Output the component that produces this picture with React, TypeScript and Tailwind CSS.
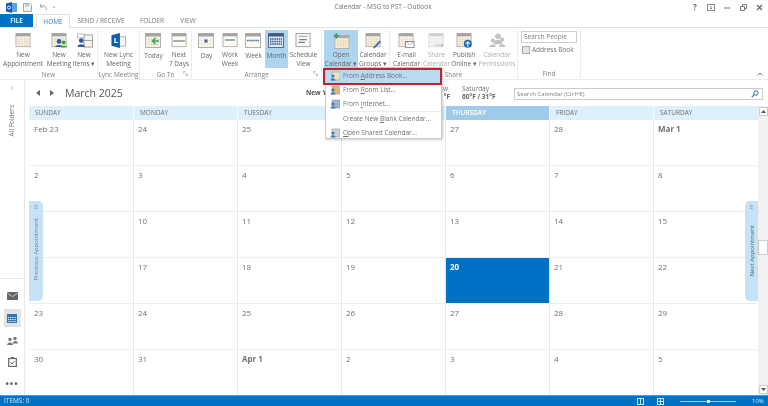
import React from "react";

type IconKind =
  | "appt" | "meet" | "items" | "lync" | "today" | "next7" | "day" | "work" | "week" | "month"
  | "sched" | "open" | "groups" | "email" | "share" | "publish" | "perm";

function CalBase({ fill = "#f9f4e6", head = "#a3a3a3", cols = 5, rows = 4, line = "#dfd3b4" }: { fill?: string; head?: string; cols?: number; rows?: number; line?: string }) {
  const xs = Array.from({ length: cols - 1 }, (_, i) => 1 + ((i + 1) * 14) / cols);
  const ys = Array.from({ length: rows - 1 }, (_, i) => 4 + ((i + 1) * 10) / rows);
  return (
    <g>
      <rect x="0.5" y="0.5" width="15" height="14" fill={fill} stroke="#b0b0b0" />
      <rect x="0.5" y="0.5" width="15" height="3" fill={head} />
      {xs.map((x) => <line key={x} x1={x} y1="4" x2={x} y2="14" stroke={line} strokeWidth="0.6" />)}
      {ys.map((y) => <line key={y} x1="1" y1={y} x2="15" y2={y} stroke={line} strokeWidth="0.6" />)}
    </g>
  );
}

function RibbonIcon({ kind }: { kind: IconKind }) {
  let inner: React.ReactNode = <CalBase />;
  if (kind === "meet") inner = (
    <g>
      <CalBase />
      <circle cx="8" cy="9" r="2.5" fill="#2a5f9e" />
      <path d="M4 15c0-3 8-3 8 0z" fill="#2a5f9e" />
      <circle cx="13" cy="10" r="2" fill="#3d9a46" />
      <path d="M10 15.5c0-3 6.500-3 6.500 0z" fill="#3d9a46" />
    </g>
  );
  if (kind === "items") inner = (
    <g>
      <rect x="8" y="2" width="9" height="12" fill="#f4f4f4" stroke="#a0a0a0" />
      <rect x="8" y="8" width="9" height="7" fill="#f9f4e6" stroke="#a0a0a0" />
      <path d="M1 1h7v4H1z" fill="#fff" stroke="#999" strokeWidth="0.7" />
      <circle cx="5" cy="8" r="2.500" fill="#2a5f9e" />
      <path d="M1 15c0-4 8-4 8 0z" fill="#2a5f9e" />
    </g>
  );
  if (kind === "lync") inner = (
    <g>
      <rect x="7" y="4" width="9" height="10" fill="#f9f4e6" stroke="#b0b0b0" />
      <path d="M1 2.500 10 0v16L1 13.500z" fill="#0f5fae" />
      <text x="3.500" y="11" fontSize="8" fontWeight="700" fill="#fff" fontFamily="Open Sans, sans-serif">L</text>
    </g>
  );
  if (kind === "today") inner = (
    <g>
      <CalBase fill="#f9f5e8" />
      <path d="M14 8H8M10.500 5 7.500 8l3 3" fill="none" stroke="#39a35a" strokeWidth="1.500" />
    </g>
  );
  if (kind === "next7") inner = (
    <g>
      <rect x="0.500" y="0.500" width="15" height="14" fill="#fdfaf0" stroke="#b0b0b0" />
      <rect x="0.500" y="0.500" width="15" height="3" fill="#a3a3a3" />
      <path d="M2 8.500h12" stroke="#667" strokeWidth="1.500" strokeDasharray="1.500 0.600" />
    </g>
  );
  if (kind === "day") inner = (
    <g>
      <CalBase cols={5} rows={3} line="#e4ddcb" fill="#fbf9f2" />
      <rect x="6.500" y="6.500" width="3" height="3" fill="#3d5f8f" />
    </g>
  );
  if (kind === "work" || kind === "week") inner = (
    <g>
      <rect x="0.500" y="0.500" width="15" height="14" fill="#fdfaf0" stroke="#b0b0b0" />
      <rect x="0.500" y="0.500" width="15" height="3" fill="#a3a3a3" />
      <path d={kind === "work" ? "M3 7.500h10" : "M2 7.500h12"} stroke="#4d6f9f" strokeWidth="1.500" strokeDasharray="1.500 0.600" />
    </g>
  );
  if (kind === "month") inner = (
    <g>
      <rect x="0.500" y="0.500" width="15" height="14" fill="#dbe6f2" stroke="#5c6f8a" />
      <rect x="0.500" y="0.500" width="15" height="3" fill="#46587a" />
      <path d="M2 6h12M2 8.500h12M2 11h12" stroke="#34558a" strokeWidth="1.400" strokeDasharray="1.500 0.700" />
    </g>
  );
  if (kind === "sched") inner = (
    <g>
      <rect x="0.500" y="0.500" width="15" height="14" fill="#f8f8f8" stroke="#a0a0a0" />
      <path d="M3 3.500h10" stroke="#a0a0a0" />
      <path d="M4 7h8M3 10h7" stroke="#808080" strokeWidth="1.200" />
    </g>
  );
  if (kind === "open") inner = (
    <g>
      <g transform="translate(1 2)"><CalBase fill="#fbeed2" head="#aaaaaa" /></g>
      <path d="M3 0v6M0 3h6" stroke="#3f9d68" strokeWidth="1.800" />
    </g>
  );
  if (kind === "groups") inner = (
    <g>
      <CalBase fill="#fbf3de" />
      <path d="M8 15.500 15 8l1.500 1.500-7 7z" fill="#3c6fb0" />
    </g>
  );
  if (kind === "email") inner = (
    <g>
      <CalBase fill="#fbf9f2" />
      <rect x="7.500" y="9" width="9" height="6.500" fill="#fff" stroke="#888" />
      <path d="m7.500 9 4.500 3.500L16.500 9" fill="none" stroke="#888" strokeWidth="0.700" />
    </g>
  );
  if (kind === "share") inner = (
    <g opacity="0.5">
      <CalBase fill="#f4f4f4" line="#c8c8c8" />
      <path d="M7 13h8M13 11l2.500 2-2.500 2" fill="none" stroke="#8a8a8a" strokeWidth="1.100" />
    </g>
  );
  if (kind === "publish") inner = (
    <g>
      <CalBase fill="#fbf3de" />
      <circle cx="12" cy="11.500" r="4.200" fill="#1c6db5" />
      <path d="M12 14.500v-5M9.800 11.500 12 9.200l2.200 2.300" fill="none" stroke="#fff" strokeWidth="1.100" />
    </g>
  );
  if (kind === "perm") inner = (
    <g fill="#c2c2c2">
      <circle cx="9" cy="3.500" r="3" />
      <path d="M4.500 11c0-5 9-5 9 0v1h-9z" />
      <circle cx="13.500" cy="7" r="2.200" />
      <circle cx="3.500" cy="8" r="2.200" />
      <path d="M0 15c0-4 7-4 7 0zM10 15c0-4 7-4 7 0z" />
    </g>
  );
  return (
    <svg width="17" height="17" viewBox="0 0 17 17" className="block">
      {inner}
    </svg>
  );
}

function RibbonButton({ width, icon, lines, active, muted }: { width: string; icon: IconKind; lines: string[]; active?: boolean; muted?: boolean }) {
  return (
    <div className={`${width} h-[38px] flex flex-col items-center pt-[3px] shrink-0 ${active ? "bg-[#aed5f0]" : ""}`}>
      <RibbonIcon kind={icon} />
      <div className={`mt-[1px] text-center text-[6.5px] leading-[9px] whitespace-nowrap ${muted ? "text-[#b0b0b0]" : "text-[#666666]"}`}>
        {lines.map((l) => <div key={l}>{l}</div>)}
      </div>
    </div>
  );
}

function Group({ width, label, launcher, children }: { width: string; label: string; launcher?: boolean; children: React.ReactNode }) {
  return (
    <div className={`${width} shrink-0 h-full border-r border-[#ececec] flex flex-col relative`}>
      <div className="h-[38px] flex">{children}</div>
      <div className="h-[11px] pt-[2px] text-center text-[6.5px] leading-[9px] text-[#808080]">{label}</div>
      {launcher && (
        <svg width="5" height="5" viewBox="0 0 5 5" className="absolute right-[3px] bottom-[2px]">
          <path d="M0.500 0.500h2M0.500 0.500v2M1.500 1.500 4.500 4.500M4.500 2.500v2h-2" fill="none" stroke="#aaa" strokeWidth="0.700" />
        </svg>
      )}
    </div>
  );
}

const weeks = [
  ["Feb 23", "24", "25", "", "27", "28", "Mar 1"],
  ["2", "3", "4", "5", "6", "7", "8"],
  ["", "10", "11", "12", "13", "14", "15"],
  ["", "17", "18", "19", "20", "21", "22"],
  ["23", "24", "25", "26", "27", "28", "29"],
  ["30", "31", "Apr 1", "2", "3", "4", "5"],
];
const dayNames = ["SUNDAY", "MONDAY", "TUESDAY", "", "THURSDAY", "FRIDAY", "SATURDAY"];

function MenuRow({ label, icon, highlight }: { label: React.ReactNode; icon?: string; highlight?: boolean }) {
  return (
    <div className={`h-[14px] flex items-center text-[6.5px] text-[#707070] ${highlight ? "bg-[#b8daf2]" : ""}`}>
      <div className="w-[17px] flex justify-center shrink-0">
        {icon && (
          <svg width="10" height="10" viewBox="0 0 10 10">
            <rect x="2" y="1" width="8" height="8" fill={icon} stroke="#999" strokeWidth="0.600" />
            <circle cx="3" cy="5" r="1.600" fill="#3a7fb8" />
            <path d="M0.500 9.500c0-3 5-3 5 0z" fill="#3a7fb8" />
          </svg>
        )}
      </div>
      <div className="whitespace-nowrap">{label}</div>
    </div>
  );
}

export default function App() {
  return (
    <div className="relative w-[768px] h-[406px] overflow-hidden bg-white font-['Open_Sans',sans-serif] flex flex-col text-[#555] blur-[0.4px]">
      {/* Title bar */}
      <div className="h-[14px] shrink-0 relative flex items-center">
        <div className="w-[20px] flex justify-center ml-[1px]">
          <svg width="11" height="11" viewBox="0 0 11 11">
            <rect x="4" y="1" width="7" height="9" fill="#5ba3dc" />
            <path d="M0 1.500 6 0v11L0 9.500z" fill="#0f5fae" />
            <circle cx="3" cy="5.500" r="1.500" fill="none" stroke="#fff" strokeWidth="0.900" />
          </svg>
        </div>
        <div className="w-[16px] flex justify-center ml-[-2px]">
          <svg width="9" height="9" viewBox="0 0 9 9">
            <path d="M0.500 0.500h6.500l1.500 1.500v6.500h-8z" fill="#f2f2f2" stroke="#a8a8a8" />
            <rect x="2" y="0.500" width="4" height="3" fill="#c4c4c4" />
          </svg>
        </div>
        <div className="w-[16px] flex justify-center">
          <svg width="9" height="9" viewBox="0 0 9 9">
            <path d="M1.500 1v3h3M1.500 4C3 2 7 1.800 7.500 7" fill="none" stroke="#a8a8a8" strokeWidth="1" />
          </svg>
        </div>
        <div className="w-[6px] text-[6px] text-[#aaa] text-center">▪</div>
        <div className="flex-1 text-center text-[6.5px] text-[#707070] pr-[59px]">Calendar - MSG to PST - Outlook</div>
        <div className="flex items-center text-[#666] absolute right-0 top-0 h-[14px]">
          <span className="w-[16px] text-center text-[8px] font-bold">?</span>
          <span className="w-[16px] flex justify-center">
            <svg width="8" height="7" viewBox="0 0 8 7"><rect x="0.500" y="0.500" width="7" height="6" fill="none" stroke="#888" /><path d="M4 2v3M2.800 3.800 4 5l1.200-1.200" stroke="#666" fill="none" strokeWidth="0.700" /></svg>
          </span>
          <span className="w-[16px] flex justify-center">
            <svg width="6" height="6" viewBox="0 0 6 6"><path d="M0 4h6" stroke="#777" strokeWidth="1" /></svg>
          </span>
          <span className="w-[16px] flex justify-center">
            <svg width="7" height="7" viewBox="0 0 7 7"><path d="M0.500 2.500h4v4h-4zM2.500 2.500v-2h4v4h-2" fill="none" stroke="#777" strokeWidth="1" /></svg>
          </span>
          <span className="w-[17px] flex justify-center">
            <svg width="7" height="7" viewBox="0 0 7 7"><path d="m1 1 5 5M6 1 1 6" stroke="#666" strokeWidth="1.200" /></svg>
          </span>
        </div>
      </div>

      {/* Tabs */}
      <div className="h-[14px] shrink-0 flex items-stretch text-[6.5px] border-b border-[#e2e2e2] text-[#777]">
        <div className="w-[33px] bg-[#0072c6] text-white font-semibold flex items-center justify-center">FILE</div>
        <div className="ml-[3px] w-[34px] h-[14px] bg-white border border-b-0 border-[#e2e2e2] text-[#2f7fc1] flex items-center justify-center">HOME</div>
        <div className="w-[62px] flex items-center justify-center">SEND / RECEIVE</div>
        <div className="w-[40px] flex items-center justify-center">FOLDER</div>
        <div className="w-[32px] flex items-center justify-center">VIEW</div>
      </div>

      {/* Ribbon */}
      <div className="h-[52px] shrink-0 flex pt-[2px] pb-[1px] border-b border-[#ececec] relative">
        <Group width="w-[98px]" label="New">
          <RibbonButton width="w-[46px]" icon="appt" lines={["New", "Appointment"]} />
          <RibbonButton width="w-[26px]" icon="meet" lines={["New", "Meeting"]} />
          <RibbonButton width="w-[24px]" icon="items" lines={["New", "Items ▾"]} />
        </Group>
        <Group width="w-[42px]" label="Lync Meeting">
          <RibbonButton width="w-[41px]" icon="lync" lines={["New Lync", "Meeting"]} />
        </Group>
        <Group width="w-[52px]" label="Go To" launcher>
          <RibbonButton width="w-[27px]" icon="today" lines={["Today"]} />
          <RibbonButton width="w-[24px]" icon="next7" lines={["Next", "7 Days"]} />
        </Group>
        <Group width="w-[130px]" label="Arrange" launcher>
          <div className="w-[3px]" />
          <RibbonButton width="w-[23px]" icon="day" lines={["Day"]} />
          <RibbonButton width="w-[24px]" icon="work" lines={["Work", "Week"]} />
          <RibbonButton width="w-[23px]" icon="week" lines={["Week"]} />
          <RibbonButton width="w-[23px]" icon="month" lines={["Month"]} active />
          <RibbonButton width="w-[31px]" icon="sched" lines={["Schedule", "View"]} />
        </Group>
        <Group width="w-[68px]" label="">
          <div className="w-[2px]" />
          <RibbonButton width="w-[34px]" icon="open" lines={["Open", "Calendar ▾"]} active />
          <RibbonButton width="w-[30px]" icon="groups" lines={["Calendar", "Groups ▾"]} />
        </Group>
        <Group width="w-[128px]" label="Share">
          <RibbonButton width="w-[33px]" icon="email" lines={["E-mail", "Calendar"]} />
          <RibbonButton width="w-[27px]" icon="share" lines={["Share", "Calendar"]} muted />
          <RibbonButton width="w-[28px]" icon="publish" lines={["Publish", "Online ▾"]} />
          <RibbonButton width="w-[38px]" icon="perm" lines={["Calendar", "Permissions"]} muted />
        </Group>
        <Group width="w-[63px]" label="Find">
          <div className="pl-[3px] pt-[1px]">
            <div className="w-[56px] h-[12px] border border-[#cdcdcd] text-[6.5px] leading-[10px] pl-[2px] text-[#808080]">Search People</div>
            <div className="mt-[2px] flex items-center gap-[2px] text-[6.5px] leading-[9px] text-[#707070] pl-[1px]">
              <svg width="8" height="8" viewBox="0 0 8 8"><rect x="0.500" y="0.500" width="7" height="7" fill="#e5e5e5" stroke="#aaa" /></svg>
              Address Book
            </div>
          </div>
        </Group>
        <svg width="6" height="4" viewBox="0 0 6 4" className="absolute right-[5px] bottom-[3px]">
          <path d="M0.500 3.500 3 1l2.500 2.500" fill="none" stroke="#777" strokeWidth="1" />
        </svg>
      </div>

      {/* Body */}
      <div className="flex-1 flex min-h-0">
        {/* Nav rail */}
        <div className="w-[25px] shrink-0 border-r border-[#e8e8e8] flex flex-col items-center">
          <div className="text-[7px] text-[#777] leading-[9px] mt-[3px]">›</div>
          <div className="[writing-mode:vertical-rl] rotate-180 text-[6.5px] text-[#707070] leading-[8px] mt-[13px]">All Folders</div>
          <div className="flex-1" />
          <div className="w-full border-t border-[#e8e8e8] flex flex-col items-center pt-[8px] pb-[2px] gap-[4px]">
            <div className="h-[18px] flex items-center">
              <svg width="11" height="8" viewBox="0 0 11 8"><rect width="11" height="8" fill="#666" /><path d="m0 1 5.500 3.500L11 1" fill="none" stroke="#ddd" strokeWidth="0.800" /></svg>
            </div>
            <div className="h-[18px] w-[17px] bg-[#e2e2e2] flex items-center justify-center">
              <svg width="10" height="9" viewBox="0 0 10 9"><rect width="10" height="9" fill="#2a78ba" /><path d="M1 3.500h8M1 5.500h8M1 7.500h8" stroke="#fff" strokeWidth="0.800" strokeDasharray="1.200 0.600" /></svg>
            </div>
            <div className="h-[18px] flex items-center">
              <svg width="11" height="9" viewBox="0 0 11 9"><circle cx="3" cy="3.500" r="1.700" fill="#777" /><path d="M0 9c0-3.500 6-3.500 6 0z" fill="#777" /><circle cx="8" cy="2.500" r="1.700" fill="#777" /><path d="M5.500 7.500c0-3.500 5.500-3.500 5.500 0z" fill="#777" /></svg>
            </div>
            <div className="h-[18px] flex items-center">
              <svg width="9" height="10" viewBox="0 0 9 10"><rect x="0.700" y="1.500" width="7.600" height="8" fill="none" stroke="#666" strokeWidth="1.200" /><rect x="3" y="0" width="3" height="2" fill="#666" /><path d="m2.500 5.500 1.500 1.500 2.500-3" fill="none" stroke="#666" /></svg>
            </div>
            <div className="h-[18px] text-[9px] leading-[18px] text-[#666] tracking-[1px] font-bold">•••</div>
          </div>
        </div>

        {/* Calendar */}
        <div className="flex-1 min-w-0 flex flex-col relative">
          {/* Header */}
          <div className="h-[26px] shrink-0 flex items-center pr-[5px]">
            <div className="w-[281px] shrink-0 flex items-center pl-[11px]">
              <svg width="5" height="6" viewBox="0 0 5 6"><path d="M4 0v6L0 3z" fill="#666" /></svg>
              <svg width="5" height="6" viewBox="0 0 5 6" className="ml-[8px]"><path d="M1 0v6l4-3z" fill="#666" /></svg>
              <div className="ml-[11px] text-[10.5px] leading-[16px] text-[#555]">March 2025</div>
            </div>
            <div className="w-[144px] shrink-0 flex items-center justify-between">
              <div className="text-[6.5px] font-bold text-[#555] whitespace-nowrap">New Y</div>
              <div className="text-right text-[6.5px] leading-[8px] text-[#707070]">
                <div className="pr-[2px]">w</div>
                <div className="font-bold text-[#666]">°F</div>
              </div>
            </div>
            <div className="ml-[12px] text-[6.5px] leading-[8px] text-[#707070] whitespace-nowrap">
              <div>Saturday</div>
              <div className="font-bold text-[#666]">60°F / 31°F</div>
            </div>
            <div className="ml-auto mt-[1px] w-[249px] h-[12px] border border-[#cdcdcd] text-[6px] leading-[10px] pl-[2px] text-[#808080] flex justify-between pr-[3px]">
              <span>Search Calendar (Ctrl+E)</span>
              <svg width="8" height="8" viewBox="0 0 8 8" className="mt-[1px]"><circle cx="5" cy="3" r="2.200" fill="none" stroke="#2a6fae" /><path d="M3.300 4.700 0.800 7.200" stroke="#2a6fae" strokeWidth="1.200" /></svg>
            </div>
          </div>

          <div className="flex-1 min-h-0 flex">
            <div className="w-[4px] shrink-0" />
            {/* Grid */}
            <div className="w-[729px] shrink-0 flex flex-col">
              <div className="grid grid-cols-[repeat(7,104px)] h-[14px] shrink-0 bg-[#def0fb] text-[6.5px] leading-[14px] text-[#707070]">
                {dayNames.map((d, i) => (
                  <div key={i} className={`pl-[6px] border-l border-[#f4f9fd] first:border-l-0 ${d === "THURSDAY" ? "bg-[#9fcbea] text-white font-semibold" : ""}`}>{d}</div>
                ))}
              </div>
              <div className="flex-1 min-h-0 overflow-hidden grid grid-cols-[repeat(7,104px)] grid-rows-[repeat(6,46px)]">
                {weeks.flatMap((row, ri) =>
                  row.map((d, ci) => {
                    const today = ri === 3 && ci === 4;
                    const bold = d === "Mar 1" || d === "Apr 1";
                    return (
                      <div
                        key={`${ri}-${ci}`}
                        className={`pl-[4px] pt-[3px] text-[8px] leading-[12px] border-b border-b-[#eeeeee] ${ci > 0 ? "border-l border-l-[#e8e8e8]" : "pl-[5px]"} ${today ? "bg-[#0072c6] text-white font-bold" : "text-[#707070]"} ${bold ? "font-bold text-[#505050]" : ""}`}
                      >
                        {d}
                      </div>
                    );
                  })
                )}
              </div>
            </div>
            {/* Scrollbar */}
            <div className="flex-1 bg-[#f1f1f1] flex flex-col items-center justify-between relative">
              <div className="w-[9px] h-[9px] bg-white border border-[#ccc] flex items-center justify-center mt-[1px]">
                <svg width="5" height="3" viewBox="0 0 5 3"><path d="M0 3 2.500 0 5 3z" fill="#555" /></svg>
              </div>
              <div className="absolute top-[134px] left-0 w-[10px] h-[15px] bg-white border border-[#ccc]" />
              <div className="w-[9px] h-[9px] bg-white border border-[#ccc] flex items-center justify-center mb-[1px]">
                <svg width="5" height="3" viewBox="0 0 5 3"><path d="M0 0 2.500 3 5 0z" fill="#555" /></svg>
              </div>
            </div>
          </div>

          {/* Side tabs */}
          <div className="absolute left-[4px] top-[121px] w-[14px] h-[100px] bg-[#c6e2f6] rounded-r-[5px] flex flex-col items-center pt-[3px]">
            <div className="text-[6px] leading-[7px] text-[#888]">≡</div>
            <div className="[writing-mode:vertical-rl] rotate-180 text-[6px] leading-[8px] text-[#808080] mt-[7px] whitespace-nowrap">Previous Appointment</div>
          </div>
          <div className="absolute left-[720px] top-[121px] w-[13px] h-[100px] bg-[#c6e2f6] rounded-l-[5px] flex flex-col items-center pt-[3px]">
            <div className="text-[6px] leading-[7px] text-[#888]">≡</div>
            <div className="[writing-mode:vertical-rl] rotate-180 text-[6px] leading-[8px] text-[#666] mt-[14px] whitespace-nowrap">Next Appointment</div>
          </div>
        </div>
      </div>

      {/* Status bar */}
      <div className="h-[11px] shrink-0 bg-[#0072c6] border-t border-[#39a0e8] flex items-center text-[6.5px] text-[#cfe6f7] pl-[4px]">
        <div className="flex-1">ITEMS: 0</div>
        <svg width="7" height="7" viewBox="0 0 7 7" className="mr-[13px]"><rect x="0.500" y="0.500" width="6" height="6" fill="none" stroke="#cfe6f7" /><path d="M3.500 1v5" stroke="#cfe6f7" /></svg>
        <svg width="7" height="7" viewBox="0 0 7 7" className="mr-[16px]"><rect x="0.500" y="0.500" width="6" height="6" fill="none" stroke="#cfe6f7" /><path d="M0.500 3.500h6M3.500 1v5" stroke="#cfe6f7" /></svg>
        <div className="w-[56px] h-[1px] bg-[#9fcdee] relative mr-[16px]">
          <div className="absolute left-[27px] top-[-1px] w-[3px] h-[3px] bg-[#e4f1fb]" />
        </div>
        <div className="w-[16px] text-[6px]">10%</div>
      </div>

      {/* Open Calendar dropdown */}
      <div className="absolute left-[325px] top-[67px] w-[117px] h-[72px] bg-white border border-[#c8c8c8] shadow-[1px_1px_2px_rgba(0,0,0,0.2)] pt-[1px]">
        <MenuRow label={<span>From <span className="underline">A</span>ddress Book...</span>} icon="#f0e4c0" highlight />
        <MenuRow label={<span>From <span className="underline">R</span>oom List...</span>} icon="#e5b878" />
        <MenuRow label={<span>From <span className="underline">I</span>nternet...</span>} icon="#9fb4c9" />
        <div className="ml-[17px] border-t border-[#ececec]" />
        <MenuRow label={<span>Create New <span className="underline">B</span>lank Calendar...</span>} />
        <MenuRow label={<span><span className="underline">O</span>pen Shared Calendar...</span>} icon="#cfcfcf" />
      </div>
      <div className="absolute left-[323px] top-[68px] w-[119px] h-[17px] border-2 border-[#bf2333]" />
    </div>
  );
}
